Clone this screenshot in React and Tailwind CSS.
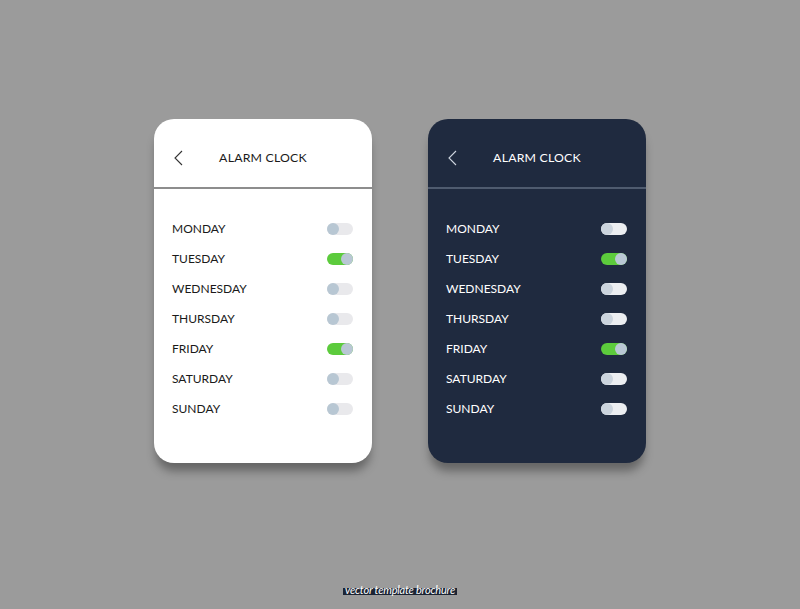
import React from "react";

const days = [
  ["MONDAY", false],
  ["TUESDAY", true],
  ["WEDNESDAY", false],
  ["THURSDAY", false],
  ["FRIDAY", true],
  ["SATURDAY", false],
  ["SUNDAY", false],
];

function Toggle({ on, dark }) {
  if (on) {
    return (
      <div className="w-[26px] h-[12px] rounded-full bg-[#5ccb3c] flex items-center justify-end">
        <div className="w-[12px] h-[12px] rounded-full bg-[#b9c7d4]" />
      </div>
    );
  }
  return (
    <div
      className={
        "w-[26px] h-[12px] rounded-full flex items-center justify-start " +
        (dark ? "bg-[#eceef1]" : "bg-[#e9e9ec]")
      }
    >
      <div
        className={
          "w-[12px] h-[12px] rounded-full " +
          (dark ? "bg-[#cbd4dd]" : "bg-[#b8c7d3]")
        }
      />
    </div>
  );
}

function Card({ dark }) {
  return (
    <div
      className={
        "w-[218px] h-[344px] rounded-[20px] shadow-[0_10px_10px_-2px_rgba(0,0,0,0.35)] flex flex-col " +
        (dark ? "bg-[#1f2a3f] text-white" : "bg-white text-[#1a1a1a]")
      }
    >
      <div className="h-[68px] flex items-center pt-[10px] relative">
        <svg
          className="absolute left-[19px] top-[31px]"
          width="12"
          height="16"
          viewBox="0 0 12 16"
          fill="none"
        >
          <path
            d="M9 1 L2 8 L9 15"
            stroke={dark ? "#cfd6e0" : "#333"}
            strokeWidth="1.1"
          />
        </svg>
        <div className="w-full text-center text-[12.3px] tracking-[0.2px]">ALARM CLOCK</div>
      </div>
      <div className={"h-[2px] " + (dark ? "bg-[#4f5b6f]" : "bg-[#8d8d8d]")} />
      <div className="flex flex-col pt-[25px] pl-[18px] pr-[19px]">
        {days.map(([d, on]) => (
          <div key={d} className="h-[30px] flex items-center justify-between">
            <span className="text-[12px] leading-none">{d}</span>
            <Toggle on={on} dark={dark} />
          </div>
        ))}
      </div>
    </div>
  );
}

export default function App() {
  return (
    <div
      className="w-[800px] h-[609px] bg-[#9b9b9b] flex flex-col items-center"
      style={{ fontFamily: "Lato, 'Noto Sans', sans-serif" }}
    >
      <div className="flex gap-[56px] mt-[119px]">
        <Card />
        <Card dark />
      </div>
      <div className="mt-[125px] bg-[#1c2433] px-[2px] h-[7px] flex items-center">
        <span className="text-white italic text-[11px] leading-none tracking-[-0.2px] -mt-[4px]">
          vector template brochure
        </span>
      </div>
    </div>
  );
}
